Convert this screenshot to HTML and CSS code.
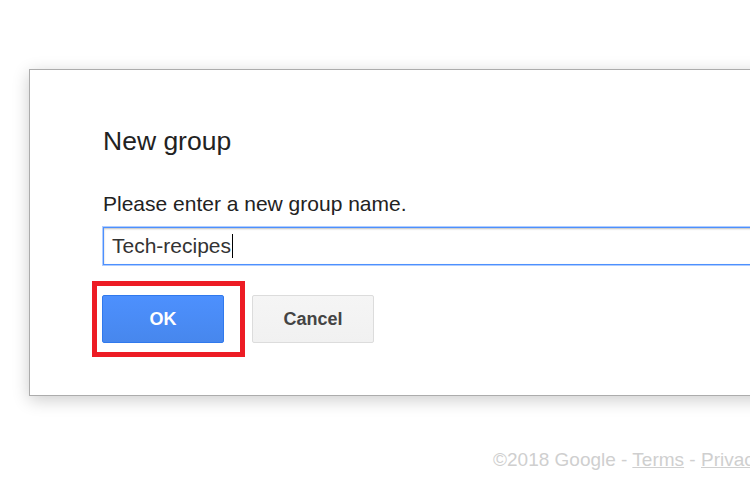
FILE: index.html
```html
<!DOCTYPE html>
<html>
<head>
<meta charset="utf-8">
<link rel="stylesheet" href="styles.css">
</head>
<body>
<div class="page">
  <div class="dialog">
    <div class="title">New group</div>
    <div class="label">Please enter a new group name.</div>
    <div class="input"><span class="value">Tech-recipes</span><span class="caret"></span></div>
    <div class="buttons">
      <div class="btn-wrap">
        <button class="btn btn-ok">OK</button>
        <span class="highlight"></span>
      </div>
      <button class="btn btn-cancel">Cancel</button>
    </div>
  </div>
  <div class="footer">©2018 Google - <a class="link">Terms</a> - <a class="link">Privacy Policy</a></div>
</div>
</body>
</html>
```

FILE: styles.css
```css
html, body {
  margin: 0;
  padding: 0;
  overflow: hidden;
  background: #fff;
  width: 750px;
  height: 500px;
}
.page {
  font-family: "Liberation Sans", Arial, sans-serif;
  padding-top: 69px;
  padding-left: 29px;
}
.dialog {
  width: 820px;
  border: 1px solid #acacac;
  box-shadow: 0 4px 16px rgba(0,0,0,0.2);
  background: #fff;
  padding: 56px 0 52px 73px;
  box-sizing: border-box;
}
.title {
  font-size: 26.5px;
  line-height: 30px;
  color: #222;
}
.label {
  margin-top: 36px;
  font-size: 21px;
  line-height: 24px;
  color: #222;
}
.input {
  margin-top: 11px;
  height: 38px;
  box-sizing: border-box;
  border: 1px solid #4d90fe;
  box-shadow: 0 0 0 1px rgba(77,144,254,0.45), inset 0 1px 2px rgba(0,0,0,0.25);
  padding-left: 8px;
  display: flex;
  align-items: center;
  font-size: 21px;
  color: #333;
}
.caret {
  display: inline-block;
  width: 1px;
  height: 24px;
  background: #000;
  margin-left: 1px;
}
.buttons {
  margin-top: 30px;
  margin-left: -1px;
  display: flex;
  gap: 28px;
}
.btn-wrap {
  position: relative;
  display: flex;
}
.btn {
  width: 122px;
  height: 48px;
  border-radius: 2px;
  font-family: "Liberation Sans", Arial, sans-serif;
  font-weight: bold;
  font-size: 18px;
  padding: 0;
}
.btn-ok {
  background: linear-gradient(#4d90fe, #4787ed);
  border: 1px solid #3079ed;
  color: #fff;
}
.btn-cancel {
  background: linear-gradient(#f5f5f5, #f1f1f1);
  border: 1px solid #dcdcdc;
  color: #444;
}
.highlight {
  position: absolute;
  left: -10px;
  top: -14px;
  right: -21px;
  bottom: -14px;
  border: 5px solid #ed1c24;
}
.footer {
  margin-top: 53px;
  padding-left: 464px;
  font-size: 19px;
  line-height: 22px;
  color: #cfcfcf;
  white-space: nowrap;
}
.link {
  color: #cfcfcf;
  text-decoration: underline;
}
```
